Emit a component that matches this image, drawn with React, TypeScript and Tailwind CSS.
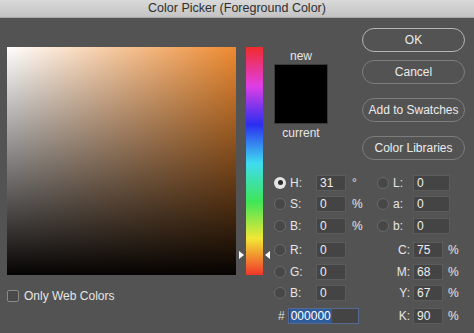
import React from "react";

const font = { fontFamily: '"Liberation Sans", Arial, sans-serif' };

function Radio({ on }: { on?: boolean }) {
  return on ? (
    <span className="flex h-[12px] w-[12px] items-center justify-center rounded-full bg-[#e4e4e4]">
      <span className="h-[5px] w-[5px] rounded-full bg-[#2a2a2a]" />
    </span>
  ) : (
    <span className="h-[12px] w-[12px] rounded-full border border-[#6a6a6a] bg-[#474747]" />
  );
}

function Field({ v, w }: { v: string; w: string }) {
  return (
    <span
      className={`flex h-[16px] ${w} items-center border border-[#5c5c5c] bg-[#444444] pl-[3px] text-[12px] text-[#eeeeee]`}
    >
      {v}
    </span>
  );
}

function RadioRow({
  label,
  v,
  unit,
  on,
  w,
  lw,
}: {
  label: string;
  v: string;
  unit?: string;
  on?: boolean;
  w: string;
  lw: string;
}) {
  return (
    <div className="flex h-[21.5px] items-center">
      <Radio on={on} />
      <span className={`ml-[4px] ${lw} text-[12px] text-[#e6e6e6]`}>{label}</span>
      <Field v={v} w={w} />
      {unit !== undefined && <span className="ml-[6px] text-[12px] text-[#e6e6e6]">{unit}</span>}
    </div>
  );
}

function Btn({ children, strong }: { children: React.ReactNode; strong?: boolean }) {
  return (
    <div
      className={`flex h-[24px] w-[103px] items-center justify-center rounded-full border text-[12px] text-[#ececec] ${
        strong ? "border-[#b5b5b5]" : "border-[#7d7d7d]"
      }`}
    >
      {children}
    </div>
  );
}

export default function App() {
  return (
    <div className="h-[333px] w-[474px] overflow-hidden bg-[#535353]" style={font}>
      <div className="flex h-[18px] items-center justify-center border-b border-[#a8a8a8] bg-[linear-gradient(to_bottom,#d9d9d9,#c3c3c3)] text-[12.5px] text-[#2e2e2e]">
        Color Picker (Foreground Color)
      </div>
      <div className="flex">
        {/* left: field */}
        <div className="flex flex-col pl-[7px] pt-[29px]">
          <div className="h-[228px] w-[229px] bg-[linear-gradient(to_top,#050302,rgba(0,0,0,0)),linear-gradient(to_right,#ffffff,#ee8a30)]" />
          <div className="mt-[12px] flex items-center">
            <span className="h-[12px] w-[12px] rounded-[2px] border border-[#8a8a8a] bg-[#4a4a4a]" />
            <span className="ml-[5px] text-[12px] text-[#e6e6e6]">Only Web Colors</span>
          </div>
        </div>
        {/* hue bar */}
        <div className="ml-[10px] pt-[29px]">
          <div className="relative h-[228px] w-[17px] bg-[linear-gradient(to_bottom,#f12b2b,#e03ee6_17%,#2b2ef0_34%,#3fdcf0_51%,#3fe657_68%,#f2e735_84%,#f0362a)]">
            <span className="absolute left-[-7px] top-[204px] h-0 w-0 border-y-[4px] border-l-[5px] border-y-transparent border-l-white" />
            <span className="absolute right-[-7px] top-[204px] h-0 w-0 border-y-[4px] border-r-[5px] border-y-transparent border-r-white" />
          </div>
        </div>
        {/* right */}
        <div className="ml-[11px] flex flex-1 flex-col">
          <div className="flex h-[154px]">
            <div className="flex w-[54px] flex-col items-center pt-[31px]">
              <span className="text-[12px] leading-[14px] text-[#e6e6e6]">new</span>
              <div className="mt-[1px] h-[60px] w-[54px] border border-[#3a3a3a] bg-black" />
              <span className="mt-[2px] text-[12px] leading-[14px] text-[#e6e6e6]">current</span>
            </div>
            <div className="ml-[34px] flex flex-col pt-[10px]">
              <Btn strong>OK</Btn>
              <div className="mt-[8px]"><Btn>Cancel</Btn></div>
              <div className="mt-[14px]"><Btn>Add to Swatches</Btn></div>
              <div className="mt-[14px]"><Btn>Color Libraries</Btn></div>
            </div>
          </div>
          <div className="flex">
            <div className="flex w-[103px] flex-col">
              <RadioRow on label="H:" v="31" unit="°" w="w-[30px]" lw="w-[26px]" />
              <RadioRow label="S:" v="0" unit="%" w="w-[30px]" lw="w-[26px]" />
              <RadioRow label="B:" v="0" unit="%" w="w-[30px]" lw="w-[26px]" />
              <div className="mt-[3px]">
                <RadioRow label="R:" v="0" w="w-[30px]" lw="w-[26px]" />
                <RadioRow label="G:" v="0" w="w-[30px]" lw="w-[26px]" />
                <RadioRow label="B:" v="0" w="w-[30px]" lw="w-[26px]" />
              </div>
              <div className="mt-[1.5px] flex h-[21.5px] items-center">
                <span className="ml-[4px] text-[12px] text-[#dcdcdc]">#</span>
                <span className="ml-[3px] flex h-[16px] w-[71px] items-center border border-[#56688c] bg-[#444444] pl-[1px]">
                  <span className="bg-[#2f5c9c] px-[1px] text-[12px] leading-[14px] text-white">000000</span>
                </span>
              </div>
            </div>
            <div className="flex flex-col">
              <RadioRow label="L:" v="0" w="w-[37px]" lw="w-[20px]" />
              <RadioRow label="a:" v="0" w="w-[37px]" lw="w-[20px]" />
              <RadioRow label="b:" v="0" w="w-[37px]" lw="w-[20px]" />
              <div className="mt-[3px] flex flex-col">
                {[
                  ["C:", "75"],
                  ["M:", "68"],
                  ["Y:", "67"],
                  ["K:", "90"],
                ].map(([l, v], i) => (
                  <div key={l} className={`flex h-[21.5px] items-center ${i === 3 ? "mt-[1.5px]" : ""}`}>
                    <span className="w-[36px] pr-[3px] text-right text-[12px] text-[#e6e6e6]">{l}</span>
                    <Field v={v} w="w-[30px]" />
                    <span className="ml-[5px] text-[12px] text-[#e6e6e6]">%</span>
                  </div>
                ))}
              </div>
            </div>
          </div>
        </div>
      </div>
    </div>
  );
}
